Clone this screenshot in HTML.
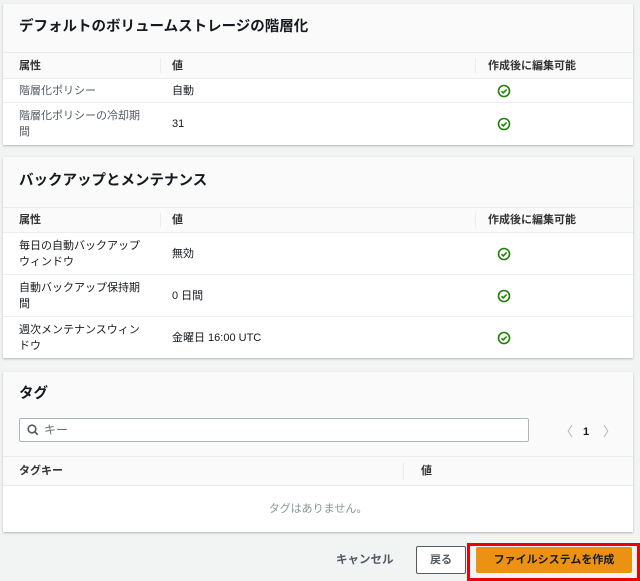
<!DOCTYPE html>
<html><head><meta charset="utf-8"><style>
*{box-sizing:border-box;margin:0;padding:0}
body{width:640px;height:581px;background:#f2f3f3;font-family:"Liberation Sans","Noto Sans CJK JP",sans-serif;color:#16191f;position:relative;overflow:hidden;font-size:11px}
.card{position:absolute;left:3px;width:630px;background:#fff;box-shadow:0 1px 2px rgba(0,0,0,.25);}
.hd{background:#fafafa;font-size:14.5px;font-weight:bold;padding-left:16px;position:relative}
.row{position:absolute;left:0;right:0;border-top:1px solid #eaeded}
.th{background:#fafafa;font-weight:bold;color:#333}
.c{position:absolute;top:50%;transform:translateY(-50%);line-height:16px}
.div{position:absolute;top:5px;bottom:5px;width:1px;background:#eaeded}
.chk{position:absolute;left:494px;top:50%;transform:translateY(-50%)}
.g{color:#545b64}
</style></head><body>
<svg width="0" height="0" style="position:absolute"><symbol id="ck" viewBox="0 0 14 14"><circle cx="7" cy="7" r="5.5" fill="none" stroke="#1d8102" stroke-width="1.6"/><path d="M4.5 7.2l1.8 1.7 3.3-3.4" fill="none" stroke="#1d8102" stroke-width="1.6"/></symbol></svg>

<div class="card" style="top:4px;height:141px">
 <div class="hd" style="height:48px;line-height:46px">デフォルトのボリュームストレージの階層化</div>
 <div class="row th" style="top:48px;height:26px"><span class="c" style="left:16px">属性</span><div class="div" style="left:157px"></div><span class="c" style="left:169px">値</span><div class="div" style="left:472px"></div><span class="c" style="left:485px">作成後に編集可能</span></div>
 <div class="row" style="top:74px;height:24px"><span class="c g" style="left:16px">階層化ポリシー</span><span class="c" style="left:169px">自動</span><svg class="chk" width="14" height="14"><use href="#ck"/></svg></div>
 <div class="row" style="top:98px;height:43px"><span class="c g" style="left:16px;width:126px">階層化ポリシーの冷却期間</span><span class="c" style="left:169px">31</span><svg class="chk" width="14" height="14"><use href="#ck"/></svg></div>
</div>

<div class="card" style="top:157px;height:201px">
 <div class="hd" style="height:50px;line-height:48px">バックアップとメンテナンス</div>
 <div class="row th" style="top:50px;height:25px"><span class="c" style="left:16px">属性</span><div class="div" style="left:157px"></div><span class="c" style="left:169px">値</span><div class="div" style="left:472px"></div><span class="c" style="left:485px">作成後に編集可能</span></div>
 <div class="row" style="top:75px;height:42px"><span class="c" style="left:16px;width:130px">毎日の自動バックアップウィンドウ</span><span class="c" style="left:169px">無効</span><svg class="chk" width="14" height="14"><use href="#ck"/></svg></div>
 <div class="row" style="top:117px;height:42px"><span class="c" style="left:16px;width:130px">自動バックアップ保持期間</span><span class="c" style="left:169px">0 日間</span><svg class="chk" width="14" height="14"><use href="#ck"/></svg></div>
 <div class="row" style="top:159px;height:42px"><span class="c" style="left:16px;width:130px">週次メンテナンスウィンドウ</span><span class="c" style="left:169px">金曜日 16:00 UTC</span><svg class="chk" width="14" height="14"><use href="#ck"/></svg></div>
</div>

<div class="card" style="top:372px;height:160px">
 <div class="hd" style="height:84px;padding-top:12px;line-height:20px">タグ
  <div style="position:absolute;left:16px;top:46px;width:510px;height:24px;border:1px solid #aab7b8;border-radius:2px;background:#fff;font-weight:normal;font-size:12px;color:#687078;line-height:22px;padding-left:24px">
   <svg style="position:absolute;left:7px;top:5px" width="12" height="12" viewBox="0 0 12 12"><circle cx="5" cy="5" r="3.8" fill="none" stroke="#545b64" stroke-width="1.6"/><path d="M7.8 7.8l3 3" stroke="#545b64" stroke-width="1.6"/></svg>キー</div>
  <div style="position:absolute;left:557px;top:50px;font-size:13px;font-weight:normal;color:#aab7b8">〈</div>
  <div style="position:absolute;left:580px;top:50px;font-size:11px">1</div>
  <div style="position:absolute;left:600px;top:50px;font-size:13px;font-weight:normal;color:#aab7b8">〉</div>
 </div>
 <div class="row th" style="top:84px;height:29px"><span class="c" style="left:16px">タグキー</span><div class="div" style="left:400px"></div><span class="c" style="left:418px">値</span></div>
 <div class="row" style="top:113px;height:47px"><span class="c" style="left:0;right:0;text-align:center;color:#879596">タグはありません。</span></div>
</div>

<div style="position:absolute;left:336px;top:551px;font-weight:bold;font-size:11.5px;color:#545b64">キャンセル</div>
<div style="position:absolute;left:416px;top:546px;width:50px;height:28px;border:1px solid #545b64;border-radius:2px;background:#fff;text-align:center;line-height:26px;font-weight:bold;color:#545b64">戻る</div>
<div style="position:absolute;left:467px;top:543px;width:173px;height:38px;border:3px solid #e00;"></div>
<div style="position:absolute;left:476px;top:547px;width:156px;height:26px;background:#ec9213;border-radius:2px;text-align:center;line-height:26px;font-weight:bold;color:#16191f">ファイルシステムを作成</div>
</body></html>
